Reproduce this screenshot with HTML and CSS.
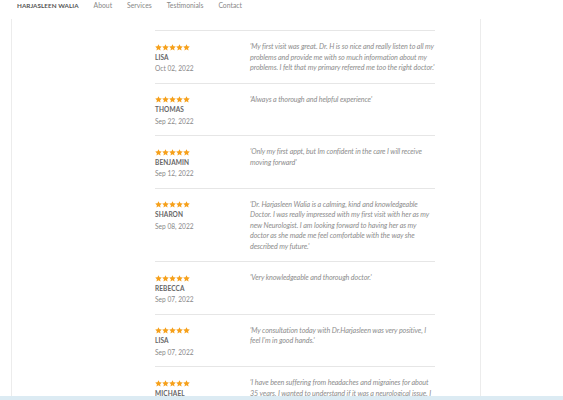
FILE: index.html
```html
<!DOCTYPE html>
<html lang="en">
<head>
<meta charset="utf-8">
<title>Testimonials - Harjasleen Walia</title>
<link rel="stylesheet" href="styles.css">
</head>
<body>
<svg class="sprite" aria-hidden="true">
  <symbol id="star" viewBox="0 0 24 24">
    <polygon points="12,0.8 15.4,7.9 23.2,8.8 17.4,14.2 19,22 12,18.1 5,22 6.6,14.2 0.8,8.8 8.6,7.9"/>
  </symbol>
</svg>

<header class="topnav">
  <a class="brand" href="#">HARJASLEEN WALIA</a>
  <a href="#">About</a>
  <a href="#">Services</a>
  <a href="#">Testimonials</a>
  <a href="#">Contact</a>
</header>

<main class="page">
  <section class="reviews">
    <article class="review">
      <div class="meta">
        <div class="stars"><svg><use href="#star"/></svg><svg><use href="#star"/></svg><svg><use href="#star"/></svg><svg><use href="#star"/></svg><svg><use href="#star"/></svg></div>
        <div class="name">LISA</div>
        <div class="date">Oct 02, 2022</div>
      </div>
      <p class="quote">'My first visit was great. Dr. H is so nice and really listen to all my problems and provide me with so much information about my problems. I felt that my primary referred me too the right doctor.'</p>
    </article>
    <article class="review">
      <div class="meta">
        <div class="stars"><svg><use href="#star"/></svg><svg><use href="#star"/></svg><svg><use href="#star"/></svg><svg><use href="#star"/></svg><svg><use href="#star"/></svg></div>
        <div class="name">THOMAS</div>
        <div class="date">Sep 22, 2022</div>
      </div>
      <p class="quote">'Always a thorough and helpful experience'</p>
    </article>
    <article class="review">
      <div class="meta">
        <div class="stars"><svg><use href="#star"/></svg><svg><use href="#star"/></svg><svg><use href="#star"/></svg><svg><use href="#star"/></svg><svg><use href="#star"/></svg></div>
        <div class="name">BENJAMIN</div>
        <div class="date">Sep 12, 2022</div>
      </div>
      <p class="quote">'Only my first appt, but Im confident in the care I will receive moving forward'</p>
    </article>
    <article class="review">
      <div class="meta">
        <div class="stars"><svg><use href="#star"/></svg><svg><use href="#star"/></svg><svg><use href="#star"/></svg><svg><use href="#star"/></svg><svg><use href="#star"/></svg></div>
        <div class="name">SHARON</div>
        <div class="date">Sep 08, 2022</div>
      </div>
      <p class="quote">'Dr. Harjasleen Walia is a calming, kind and knowledgeable Doctor. I was really impressed with my first visit with her as my new Neurologist. I am looking forward to having her as my doctor as she made me feel comfortable with the way she described my future.'</p>
    </article>
    <article class="review">
      <div class="meta">
        <div class="stars"><svg><use href="#star"/></svg><svg><use href="#star"/></svg><svg><use href="#star"/></svg><svg><use href="#star"/></svg><svg><use href="#star"/></svg></div>
        <div class="name">REBECCA</div>
        <div class="date">Sep 07, 2022</div>
      </div>
      <p class="quote">'Very knowledgeable and thorough doctor.'</p>
    </article>
    <article class="review">
      <div class="meta">
        <div class="stars"><svg><use href="#star"/></svg><svg><use href="#star"/></svg><svg><use href="#star"/></svg><svg><use href="#star"/></svg><svg><use href="#star"/></svg></div>
        <div class="name">LISA</div>
        <div class="date">Sep 07, 2022</div>
      </div>
      <p class="quote">'My consultation today with Dr.Harjasleen was very positive, I feel I'm in good hands.'</p>
    </article>
    <article class="review">
      <div class="meta">
        <div class="stars"><svg><use href="#star"/></svg><svg><use href="#star"/></svg><svg><use href="#star"/></svg><svg><use href="#star"/></svg><svg><use href="#star"/></svg></div>
        <div class="name">MICHAEL</div>
        <div class="date">Sep 02, 2022</div>
      </div>
      <p class="quote">'I have been suffering from headaches and migraines for about 35 years. I wanted to understand if it was a neurological issue. I found Dr. Walia to be very thorough and caring.'</p>
    </article>
  </section>
</main>

<div class="notice-bar"></div>
</body>
</html>
```

FILE: styles.css
```css
html, body {
  margin: 0;
  padding: 0;
  background: #fff;
  height: 100%;
  overflow: hidden;
}

body {
  font-family: "Source Sans Pro", Lato, "Noto Sans", sans-serif;
  color: #777;
}

.sprite {
  display: none;
}

/* top navigation */
.topnav {
  display: flex;
  align-items: flex-start;
  height: 19px;
  box-sizing: border-box;
  padding: 1px 0 0 17px;
  font-size: 6.8px;
  line-height: 9px;
}

.topnav a {
  color: #888;
  text-decoration: none;
  margin-right: 15px;
}

.topnav .brand {
  color: #555;
  font-weight: 700;
  font-size: 6.3px;
  letter-spacing: 0.05px;
}

/* main content column */
.page {
  width: 468px;
  margin-left: 11px;
  border-left: 1px solid #ececec;
  border-right: 1px solid #ececec;
  padding-top: 11px;
  min-height: 400px;
}

.reviews {
  width: 280px;
  margin-left: 143px;
}

.review {
  display: grid;
  grid-template-columns: 95px 1fr;
  border-top: 1px solid #e6e6e6;
  padding: 11px 0 9px;
  line-height: 10.5px;
}

.stars {
  display: flex;
  align-items: center;
  height: 10.5px;
  color: #f6a01a;
}

.stars svg {
  width: 7px;
  height: 7px;
  fill: currentColor;
}

.name {
  font-size: 6.5px;
  font-weight: 700;
  color: #666;
  letter-spacing: 0.1px;
}

.date {
  font-size: 6.6px;
  color: #888;
}

.quote {
  margin: 0;
  font-size: 7.2px;
  font-style: italic;
  letter-spacing: -0.1px;
  color: #8d8d8d;
}

/* light strip pinned to the bottom of the window */
.notice-bar {
  position: fixed;
  left: 0;
  right: 0;
  bottom: 0;
  height: 4px;
  background: #dcebf3;
}
```
